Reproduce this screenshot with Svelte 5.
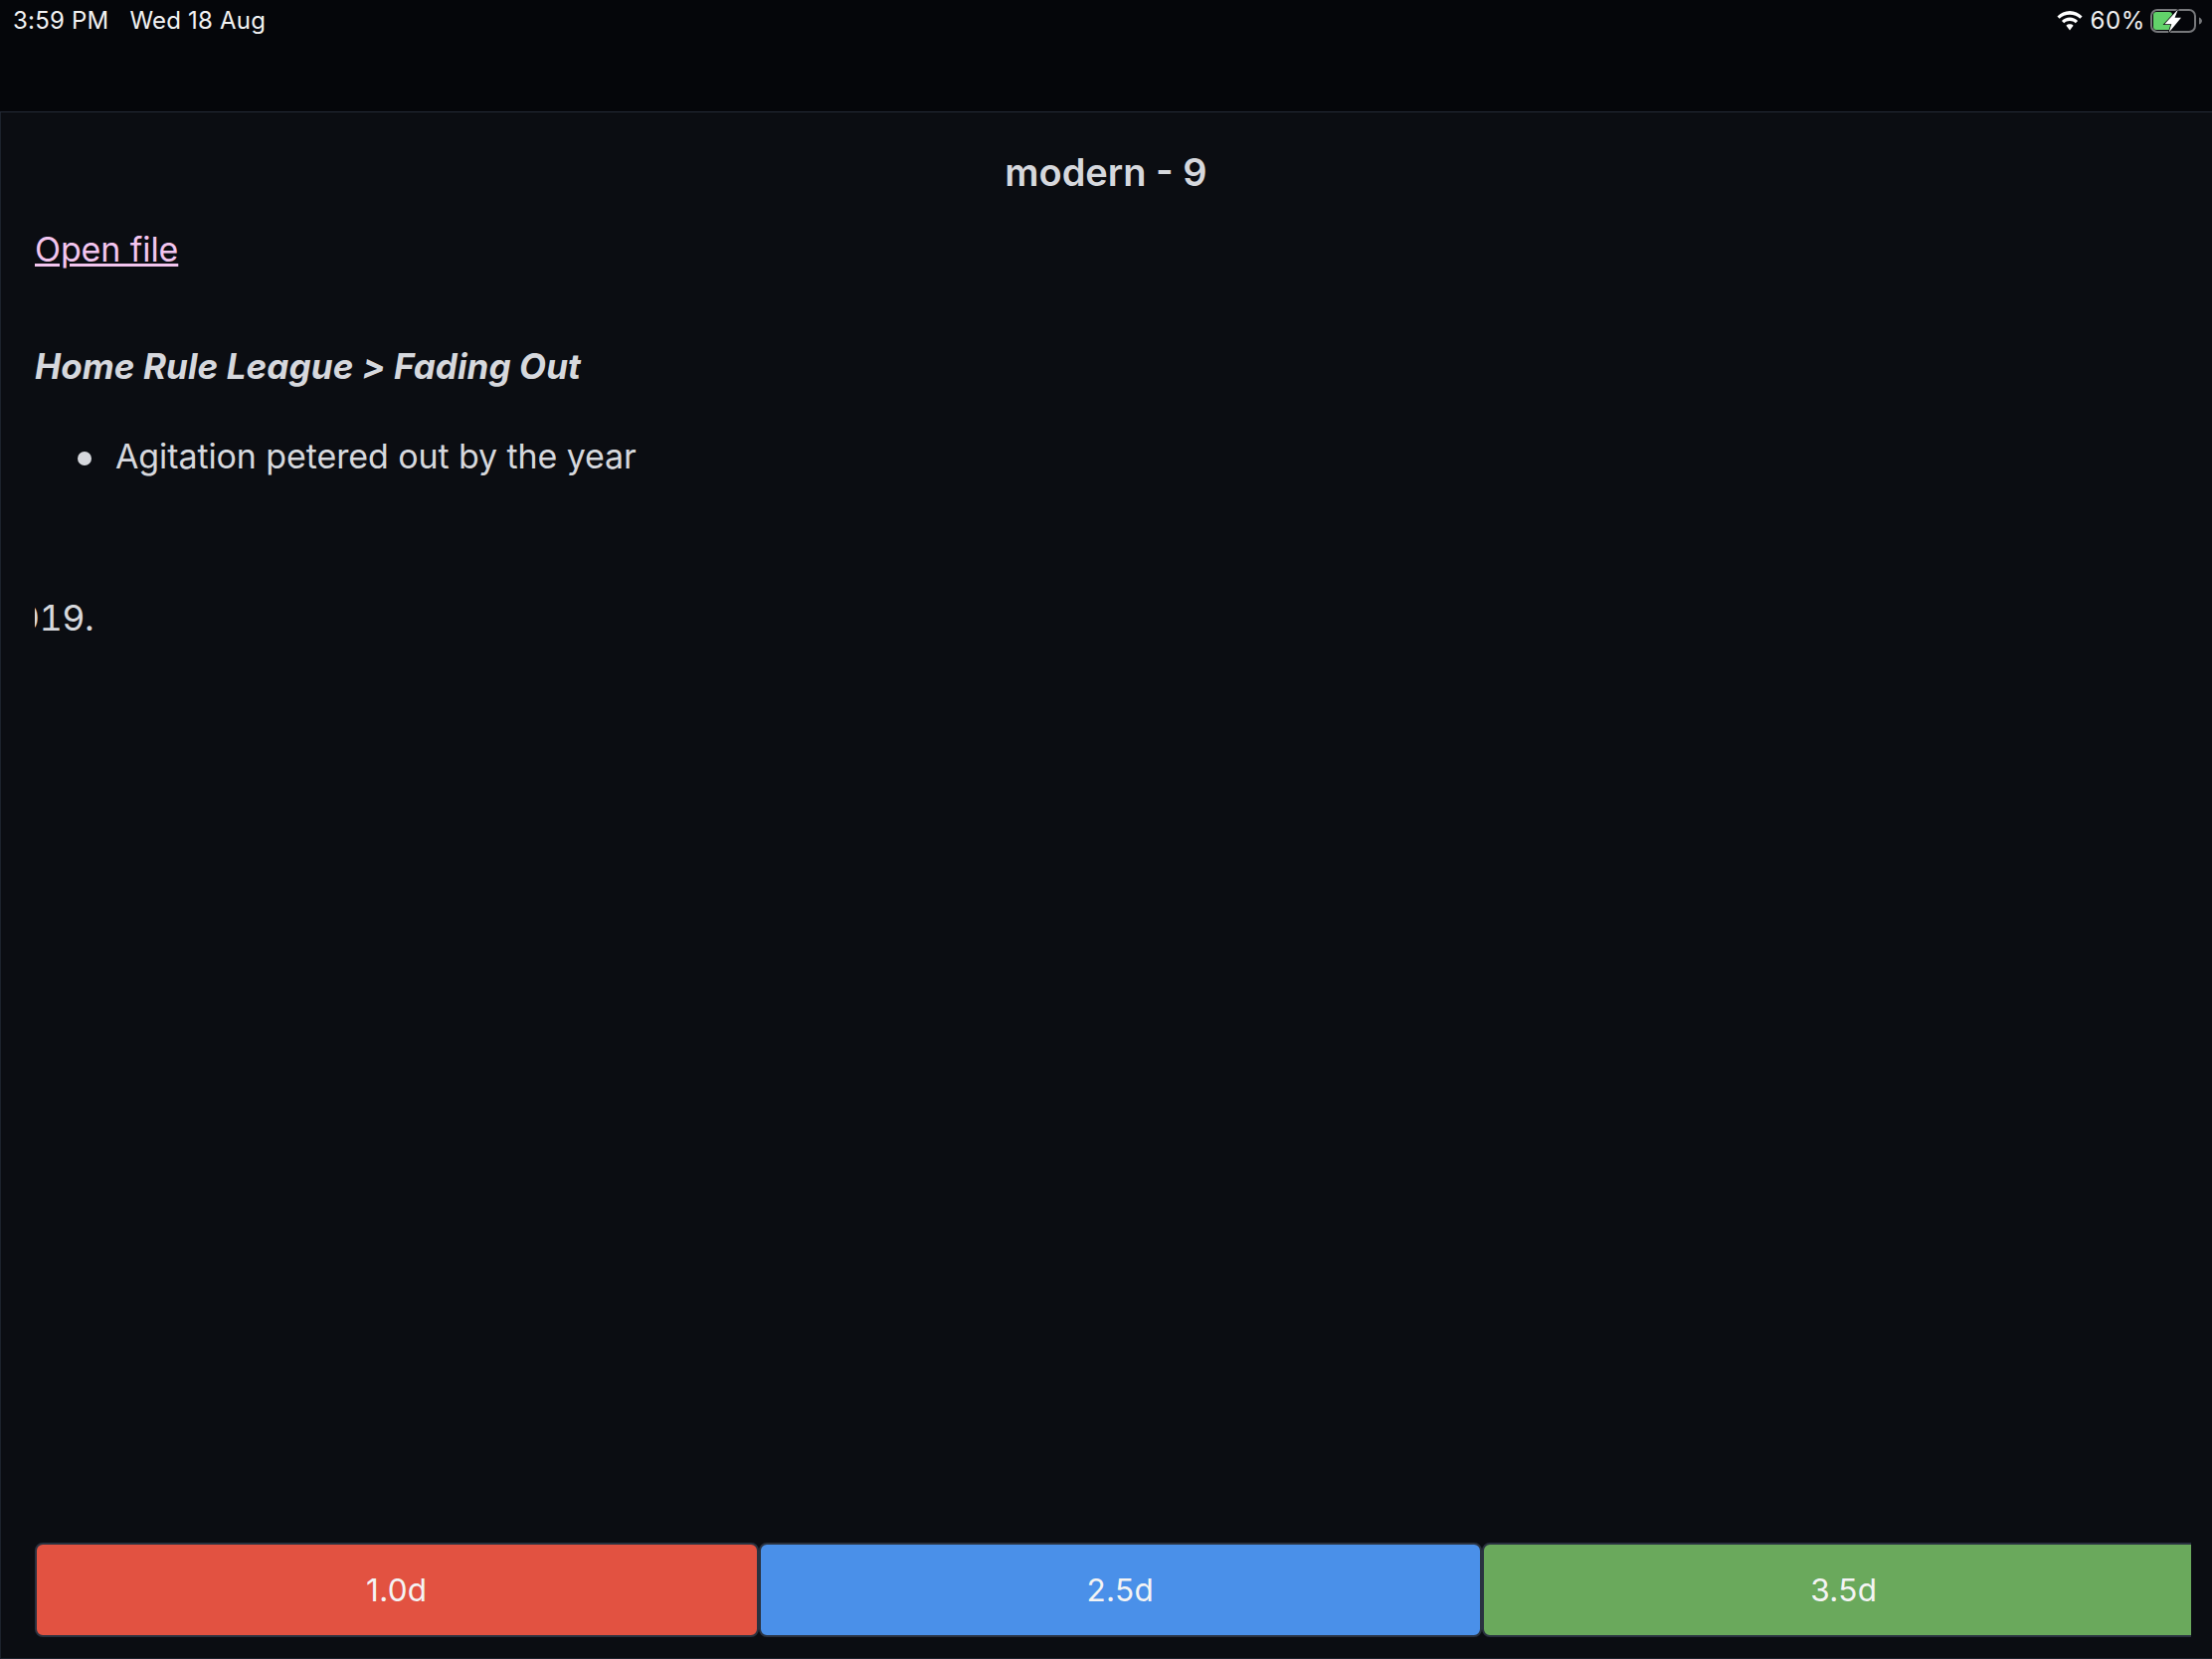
<script>
	const answers = [
		{ label: '1.0d', kind: 'again' },
		{ label: '2.5d', kind: 'good' },
		{ label: '3.5d', kind: 'easy' }
	];
</script>

<div class="screen">
	<!-- iPad status bar -->
	<header class="status">
		<div class="status-left">
			<span>3:59 PM</span>
			<span>Wed 18 Aug</span>
		</div>
		<div class="status-right">
			<svg class="wifi" viewBox="0 0 28 20" width="28" height="20">
				<path d="M14 3.800c4 0 7.600 1.500 10.300 4l2.300-2.400C23.300 2.100 18.900 0 14 0S4.700 2.100 1.400 5.400l2.300 2.400c2.700-2.500 6.300-4 10.300-4z" fill="#fff" />
				<path d="M14 10.100c2.200 0 4.200.8 5.800 2.200l2.300-2.400C20 7.900 17.100 6.600 14 6.600S8 7.900 5.900 9.900l2.300 2.400c1.600-1.400 3.600-2.200 5.800-2.200z" fill="#fff" />
				<path d="M14 13.300c-1.400 0-2.700.5-3.600 1.400L14 19.400l3.600-4.700c-.9-.9-2.200-1.400-3.600-1.400z" fill="#fff" />
			</svg>
			<span class="percent">60%</span>
			<svg class="battery" viewBox="0 0 52 26" width="52" height="26">
				<rect x="1" y="2" width="44" height="22" rx="6" fill="none" stroke="#77787b" stroke-width="2" />
				<rect x="3" y="4" width="19" height="18" rx="3" fill="#62d26a" />
				<path d="M49 9.500c1.700.5 3 2 3 3.500s-1.300 3-3 3.500z" fill="#77787b" />
				<path d="M28 1.300L14.300 16.300h7L18.600 24.700 31 9.700h-6.400z" fill="#fff" stroke="#050609" stroke-width="1.500" paint-order="stroke" />
			</svg>
		</div>
	</header>

	<main class="card">
		<h1>modern - 9</h1>
		<a class="file-link" href="#top">Open file</a>
		<p class="crumbs">Home Rule League &gt; Fading Out</p>
		<ul>
			<li>Agitation petered out by the year</li>
		</ul>
		<!-- text scrolled sideways, first digits cut off -->
		<div class="overflow-text"><span>2019.</span></div>

		<div class="answers">
			{#each answers as answer}
				<button class={answer.kind}>{answer.label}</button>
			{/each}
		</div>
	</main>
</div>

<style>
	:global(body) {
		margin: 0;
		background: #0b0d12;
	}

	.screen {
		width: 2224px;
		height: 1668px;
		display: flex;
		flex-direction: column;
		overflow: hidden;
		font-family: Inter, 'Liberation Sans', sans-serif;
		color: #d6d8dd;
	}

	.status {
		height: 113px;
		box-sizing: border-box;
		flex: none;
		display: flex;
		justify-content: space-between;
		align-items: flex-start;
		padding: 6px 10px 0 13px;
		background: #05060a;
		border-bottom: 1px solid #252b36;
		color: #f2f2f3;
		font-size: 24px;
		line-height: 29px;
		letter-spacing: 0.2px;
	}

	.status-left {
		display: flex;
		gap: 21px;
	}

	.status-right {
		display: flex;
		align-items: center;
		gap: 7px;
	}

	.percent {
		margin-right: -2px;
		letter-spacing: 0.6px;
	}

	.card {
		flex: 1;
		min-height: 0;
		display: flex;
		flex-direction: column;
		box-sizing: border-box;
		padding: 0 21px 21px 34px;
		background: #0b0d12;
		border-left: 1px solid #1c222c;
		border-bottom: 1px solid #1c222c;
	}

	h1 {
		margin: 37px 14px 0 0;
		text-align: center;
		font-size: 38px;
		line-height: 46px;
		font-weight: 600;
	}

	.file-link {
		margin-top: 34px;
		align-self: flex-start;
		color: #f3c5ef;
		font-size: 34px;
		line-height: 42px;
		letter-spacing: -0.1px;
	}

	.crumbs {
		margin: 74px 0 0;
		font-size: 35px;
		line-height: 44px;
		font-weight: 700;
		font-style: italic;
		letter-spacing: 0.1px;
	}

	ul {
		margin: 47px 0 0;
		padding: 0 0 0 43px;
		list-style: none;
		font-size: 34px;
		line-height: 44px;
		letter-spacing: -0.1px;
	}

	li {
		display: flex;
		align-items: center;
		gap: 24px;
	}

	li::before {
		content: '';
		width: 14px;
		height: 14px;
		margin-top: 3px;
		border-radius: 50%;
		background: #d6d8dd;
	}

	.overflow-text {
		margin-top: 117px;
		overflow: hidden;
		font-size: 36px;
		line-height: 44px;
		font-feature-settings: 'tnum';
		letter-spacing: -0.6px;
	}

	.overflow-text span {
		display: block;
		margin-left: -41px;
		padding-top: 1px;
	}

	.answers {
		margin-top: auto;
		display: flex;
		overflow: hidden;
	}

	button {
		flex: none;
		width: 727.5px;
		height: 95px;
		box-sizing: border-box;
		border: 2px solid #2a3240;
		border-radius: 8px;
		color: #f4f4f4;
		font-family: inherit;
		font-size: 31.5px;
		letter-spacing: 0.3px;
		padding: 0;
	}

	.again {
		background: #e25241;
	}

	.good {
		background: #4a90e9;
	}

	.easy {
		background: #6aa95c;
	}
</style>
